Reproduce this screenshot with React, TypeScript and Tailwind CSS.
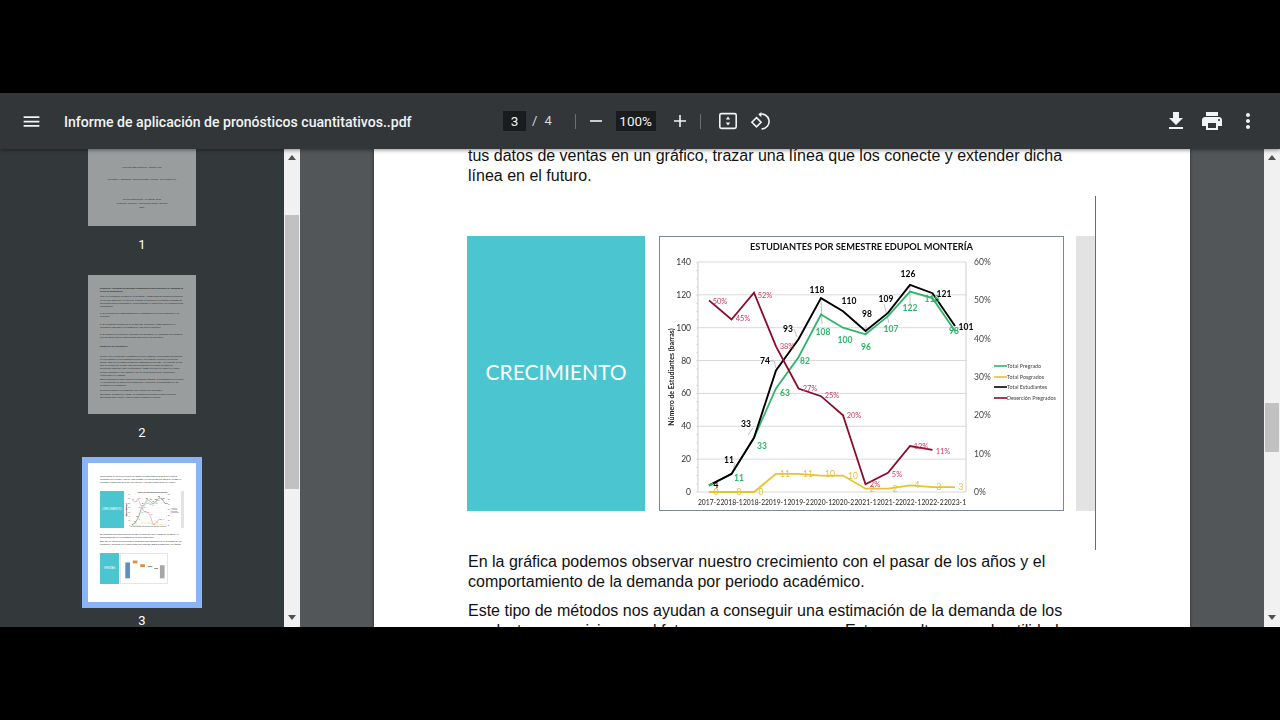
import { ReactNode } from "react";

const COL_X = [709, 731.5, 754, 776, 798.5, 821, 843, 865.5, 888, 910, 932.5, 955];
const X_LABELS = ["2017-2", "2018-1", "2018-2", "2019-1", "2019-2", "2020-1", "2020-2", "2021-1", "2021-2", "2022-1", "2022-2", "2023-1"];

const toLine = (vals: number[], scale: number) =>
  vals.map((v, i) => `${COL_X[i]},${492 - v * scale}`).join(" ");

const BLACK = [4, 11, 33, 74, 93, 118, 110, 98, 109, 126, 121, 101];
const GREEN = [4, 11, 33, 63, 82, 108, 100, 96, 107, 122, 118, 98];
const GOLD = [0, 0, 0, 11, 11, 10, 10, 2, 2, 4, 3, 3];
const RED = [50, 45, 52, 38, 27, 25, 20, 2, 5, 12, 11];

type Label = [string, number, number];

const BLACK_LABELS: Label[] = [["4", 716, 488], ["11", 729, 463], ["33", 746, 427], ["74", 765, 364], ["93", 788, 332], ["118", 817, 293], ["110", 849, 304], ["98", 867, 317], ["109", 886, 302], ["126", 908, 277], ["121", 944, 297], ["101", 966, 330]];
const GREEN_LABELS: Label[] = [["11", 739, 481], ["33", 762, 449], ["63", 785, 396], ["82", 805, 364], ["108", 823, 335], ["100", 845, 343], ["96", 866, 350], ["107", 891, 332], ["122", 910, 311], ["118", 932, 302], ["98", 954, 334]];
const GOLD_LABELS: Label[] = [["0", 716, 495], ["0", 739, 495], ["0", 761, 495], ["11", 785, 477], ["11", 808, 477], ["10", 830, 477], ["10", 853, 479], ["2", 872, 492], ["2", 895, 492], ["4", 917, 488], ["3", 939, 490], ["3", 961, 490]];
const RED_LABELS: Label[] = [["50%", 720, 304], ["45%", 743, 321], ["52%", 765, 298], ["38%", 787, 349], ["27%", 810, 391], ["25%", 832, 398], ["20%", 854, 418], ["2%", 875, 487], ["5%", 897, 477], ["12%", 921, 449], ["11%", 943, 454]];

const LEGEND: [string, string, number][] = [
  ["Total Pregrado", "#2fb56a", 366],
  ["Total Posgrados", "#e8c32e", 377],
  ["Total Estudiantes", "#000000", 387],
  ["Deserción Pregrados", "#8b0a2a", 398],
];

function GrowthChart({ className }: { className: string }) {
  return (
    <svg viewBox="659 236 405 275" className={`font-['Lato',sans-serif] ${className}`}>
      <text x="861.5" y="250" fontSize="10" fontWeight="700" textAnchor="middle" fill="#111" textLength="223" lengthAdjust="spacingAndGlyphs">
        ESTUDIANTES POR SEMESTRE EDUPOL MONTERÍA
      </text>
      {[0, 20, 40, 60, 80, 100, 120, 140].map((v) => (
        <g key={v}>
          <line x1="698" x2="966" y1={492 - v * 1.643} y2={492 - v * 1.643} stroke="#d9d9d9" strokeWidth="1" />
          <text x="691" y={495 - v * 1.643} fontSize="8.5" textAnchor="end" fill="#333">{v}</text>
        </g>
      ))}
      {[0, 10, 20, 30, 40, 50, 60].map((p) => (
        <text key={p} x="974" y={495 - p * 3.833} fontSize="8.5" fill="#444">{p}%</text>
      ))}
      {Array.from({ length: 29 }, (_, i) => (
        <line key={i} x1="696" x2="698" y1={492 - i * 8.2} y2={492 - i * 8.2} stroke="#c9c9c9" strokeWidth="0.6" />
      ))}
      <line x1="698" x2="698" y1="262" y2="492" stroke="#cfcfcf" />
      <line x1="966" x2="966" y1="262" y2="492" stroke="#cfcfcf" />
      {X_LABELS.map((l, i) => (
        <text key={l} x={COL_X[i]} y="505" fontSize="7.6" fontWeight="500" textAnchor="middle" fill="#333" textLength="22.2" lengthAdjust="spacingAndGlyphs">{l}</text>
      ))}
      <text transform="translate(674 377) rotate(-90)" fontSize="7" fontWeight="700" textAnchor="middle" fill="#222">
        Número de Estudiantes (barras)
      </text>

      <path d="M735 463l-2 8M753 428l-5 7M769 361h5l2 7M794 329l3 8M884 304l5 19M821 300l1 24M844 335l1 3M866 325v10M910 286v5M910 292v14" fill="none" stroke="#a8a8a8" strokeWidth="0.7" />

      <polyline points={toLine(GOLD, 1.643)} fill="none" stroke="#e8c32e" strokeWidth="1.8" />
      <polyline points={toLine(GREEN, 1.643)} fill="none" stroke="#2fb56a" strokeWidth="1.8" />
      <polyline points={toLine(BLACK, 1.643)} fill="none" stroke="#000" strokeWidth="1.9" />
      <path d="M709 485.5l4-2" fill="none" stroke="#2fb56a" strokeWidth="2.2" />
      <polyline points={toLine(RED, 3.833)} fill="none" stroke="#8b0a2a" strokeWidth="1.8" />

      {GOLD_LABELS.map(([t, x, y], i) => (
        <text key={i} x={x} y={y} fontSize="8.5" textAnchor="middle" fill="#e3bf3b">{t}</text>
      ))}
      {GREEN_LABELS.map(([t, x, y], i) => (
        <text key={i} x={x} y={y} fontSize="8.5" fontWeight="700" textAnchor="middle" fill="#2fb56a">{t}</text>
      ))}
      {BLACK_LABELS.map(([t, x, y], i) => (
        <text key={i} x={x} y={y} fontSize="8.5" fontWeight="700" textAnchor="middle" fill="#000">{t}</text>
      ))}
      {RED_LABELS.map(([t, x, y], i) => (
        <text key={i} x={x} y={y} fontSize="7.5" textAnchor="middle" fill="#c8405f">{t}</text>
      ))}

      {LEGEND.map(([t, c, y]) => (
        <g key={t}>
          <line x1="994" x2="1007" y1={y} y2={y} stroke={c} strokeWidth="1.6" />
          <text x="1007" y={y + 2} fontSize="5.4" fill="#444">{t}</text>
        </g>
      ))}
    </svg>
  );
}

function SmallBars() {
  return (
    <svg viewBox="0 0 48 31" className="h-[31px] w-[48px] border border-[#e5e5e5]">
      <rect x="4" y="9" width="5" height="17" fill="#5b8fc4" />
      <rect x="12" y="7" width="5" height="3" fill="#e08a3c" />
      <rect x="20" y="11" width="5" height="3" fill="#e08a3c" />
      <rect x="28" y="13" width="5" height="1" fill="#888" />
      <rect x="35" y="15" width="4" height="1" fill="#888" />
      <rect x="41" y="12" width="5" height="14" fill="#a6a6a6" />
    </svg>
  );
}

function Icon({ d, size = 24 }: { d: string; size?: number }) {
  return (
    <svg width={size} height={size} viewBox="0 0 24 24" fill="#f1f3f4">
      <path d={d} />
    </svg>
  );
}

function Scrollbar({ thumb }: { thumb: string }) {
  return (
    <div className="relative flex h-full w-4 shrink-0 flex-col items-center bg-[#f1f1f1]">
      <svg width="8" height="5" viewBox="0 0 8 5" className="mt-[6px] shrink-0">
        <path d="M4 0l4 5H0z" fill="#505050" />
      </svg>
      <div className={`w-[14px] shrink-0 bg-[#c1c1c1] ${thumb}`} />
      <svg width="8" height="5" viewBox="0 0 8 5" className="mt-auto mb-[7px] shrink-0">
        <path d="M0 0h8L4 5z" fill="#505050" />
      </svg>
    </div>
  );
}

function Thumb({ n, children, selected }: { n: number; children: ReactNode; selected?: boolean }) {
  return (
    <>
      {selected ? (
        <div className="h-[139px] w-[108px] shrink-0 overflow-hidden bg-white shadow-[0_0_0_6px_#8ab4f8]">{children}</div>
      ) : (
        <div className="h-[139px] w-[108px] shrink-0 overflow-hidden bg-[#9a9d9e]">{children}</div>
      )}
      <div className="h-[49px] shrink-0 pt-[10px] text-[13px] leading-[18px] text-white">{n}</div>
    </>
  );
}

const P1 = "tus datos de ventas en un gráfico, trazar una línea que los conecte y extender dicha línea en el futuro.";

function Sidebar() {
  return (
    <aside className="flex h-full w-[284px] shrink-0 flex-col items-center overflow-hidden bg-[#33383b] font-['Roboto',sans-serif]">
      <div className="-mt-[62px] flex flex-col items-center">
        <Thumb n={1}>
          <div className="pt-[79px] text-center font-['Liberation_Sans',sans-serif] text-[2.2px] leading-[3px] text-[#222]">
            <p>Universal Observaciones - Johana Vega</p>
            <p className="mt-[9px]">Pronóstico Y Capacidad, Marco Pronóstico Adelaqui, CC 1.003.540.96</p>
            <p className="mt-[17px]">Servicio Nacional De Aprendizaje Sena</p>
            <p className="mt-[1px]">Centro De Comercio Y Servicios Regional Antioquia</p>
            <p className="mt-[1px]">2024</p>
          </div>
        </Thumb>
        <Thumb n={2}>
          <div className="px-[12px] pt-[12px] font-['Liberation_Sans',sans-serif] text-[2.2px] leading-[3.2px] text-[#222]">
            <p className="font-bold">Evidencia: Aplicación de métodos cuantitativos para pronóstico de demanda de servicios académicos.</p>
            <p className="mt-[2px]">Una vez recopilados los datos de la demanda y establecidas las variables principales del periodo académico, se procede a aplicar los métodos de pronóstico cuantitativos adecuados para la organización y sus programas, de manera que los resultados sean comparables.</p>
            <p className="mt-[4px]">1. Se recopilan los registros históricos de estudiantes por periodo académico y su deserción.</p>
            <p className="mt-[4px]">2. Se identifican los patrones de crecimiento, tendencia y estacionalidad de la información disponible en la institución y sus sedes regionales.</p>
            <p className="mt-[4px]">3. Se aplican los métodos de pronóstico seleccionados y se comparan los resultados con los datos reales del sistema para cada uno de los semestres.</p>
            <p className="mt-[6px] font-bold">Desarrollo de la Evidencia</p>
            <p className="mt-[6px]">Método: Con el pronóstico cuantitativo se puede analizar el comportamiento histórico de la demanda de los programas ofrecidos y proyectar su evolución en periodos futuros. Para ello se toman los datos de matrícula por semestre y se ordenan en una serie de tiempo que permite observar su tendencia. Los datos muestran un crecimiento sostenido entre los años 2017 y 2022, con una leve caída en el último periodo registrado, lo que justifica el uso de promedios móviles y suavización exponencial en el análisis.</p>
            <p className="mt-[1px]">Estos resultados permiten planear la capacidad instalada, la contratación de docentes y el presupuesto de cada periodo académico, reduciendo la incertidumbre de las decisiones de la institución.</p>
            <p className="mt-[1px]">El método utilizado es consistente con el objetivo del pronóstico.</p>
            <p className="mt-[1px]">En síntesis, los datos de ventas y de demanda nos ayudan a tomar decisiones informadas para el futuro y para mejorar la gestión del servicio.</p>
          </div>
        </Thumb>
        <Thumb n={3} selected>
          <div className="pl-[12px] pt-[12px] font-['Liberation_Sans',sans-serif] text-[2.2px] leading-[2.8px] text-[#222]">
            <p className="w-[82px]">Las técnicas de series de tiempo se basan en datos históricos para proyectar la demanda. Por ejemplo, una de ellas consiste en representar {P1}</p>
            <div className="mt-[8px] flex items-center gap-[1px]">
              <div className="flex h-[37px] w-[24px] items-center justify-center bg-[#4bc5d0] text-[2.9px] text-white">CRECIMIENTO</div>
              <GrowthChart className="h-[37px] w-[55px]" />
              <div className="h-[37px] w-[3px] bg-[#e3e3e3]" />
            </div>
            <p className="mt-[5px] w-[82px]">En la gráfica podemos observar nuestro crecimiento con el pasar de los años y el comportamiento de la demanda por periodo académico.</p>
            <p className="mt-[1px] w-[82px]">Este tipo de métodos nos ayudan a conseguir una estimación de la demanda de los productos y servicios en el futuro para una empresa. Estos resultan muy de utilidad.</p>
            <div className="mt-[7px] flex items-center gap-[1px]">
              <div className="flex h-[31px] w-[19px] items-center justify-center bg-[#4bc5d0] text-[2.9px] text-white">VENTAS</div>
              <SmallBars />
            </div>
          </div>
        </Thumb>
      </div>
    </aside>
  );
}

function Toolbar() {
  return (
    <header className="relative z-10 flex h-[56px] shrink-0 items-center bg-[#323639] pl-[21px] text-[#f1f3f4] shadow-[0_1px_4px_rgba(0,0,0,0.45)] font-['Roboto',sans-serif]">
      <Icon size={21} d="M3 18h18v-2H3v2zm0-5h18v-2H3v2zm0-7v2h18V6H3z" />
      <h1 className="ml-[22px] w-[439px] truncate pt-[2px] text-[14.1px] leading-[20px] font-medium">Informe de aplicación de pronósticos cuantitativos..pdf</h1>
      <div className="flex h-[20px] w-[23px] items-center justify-center bg-[#191b1c] text-[13.5px]">3</div>
      <span className="ml-[6px] text-[13px] text-[#d5d7d8]">/</span>
      <span className="ml-[7px] text-[13px] text-[#d5d7d8]">4</span>
      <div className="ml-[23px] h-[15px] w-px bg-[#6c6f72]" />
      <svg width="24" height="24" viewBox="0 0 24 24" className="ml-[8px]" fill="#f1f3f4">
        <path d="M6 11.2h12v1.6H6z" />
      </svg>
      <div className="ml-[8px] flex h-[20px] w-[40px] items-center justify-center bg-[#191b1c] text-[13.5px]">100%</div>
      <svg width="24" height="24" viewBox="0 0 24 24" className="ml-[12px]" fill="#f1f3f4">
        <path d="M18 12.8h-5.2V18h-1.6v-5.2H6v-1.6h5.2V6h1.6v5.2H18z" />
      </svg>
      <div className="ml-[8px] mr-[15px] h-[15px] w-px bg-[#6c6f72]" />
      <svg width="24" height="24" viewBox="0 0 24 24" fill="none" stroke="#f1f3f4">
        <rect x="3.8" y="4.6" width="16.4" height="14.8" rx="1.6" strokeWidth="1.6" />
        <path d="M12 7.5l2.2 3h-4.4zM12 16.5l-2.2-3h4.4z" fill="#f1f3f4" stroke="none" />
      </svg>
      <svg width="24" height="24" viewBox="0 0 24 24" className="ml-[8px]" fill="none" stroke="#f1f3f4" strokeWidth="1.6">
        <path d="M8.5 8.6l4.6 4.6-4.6 4.6-4.6-4.6z" />
        <path d="M11 5.6a7.4 7.4 0 1 1 2.6 14.3" />
        <path d="M13.4 3L10.4 5.6l3 2.6" fill="#f1f3f4" stroke="none" />
      </svg>
      <div className="ml-auto flex items-center gap-[12px] pr-[20px]">
        <Icon d="M19 9h-4V3H9v6H5l7 7 7-7zM5 18v2h14v-2H5z" />
        <Icon d="M19 8H5c-1.66 0-3 1.34-3 3v6h4v4h12v-4h4v-6c0-1.66-1.34-3-3-3zm-3 11H8v-5h8v5zm3-7c-.55 0-1-.45-1-1s.45-1 1-1 1 .45 1 1-.45 1-1 1zm-1-9H6v4h12V3z" />
        <Icon d="M12 8c1.1 0 2-.9 2-2s-.9-2-2-2-2 .9-2 2 .9 2 2 2zm0 2c-1.1 0-2 .9-2 2s.9 2 2 2 2-.9 2-2-.9-2-2-2zm0 6c-1.1 0-2 .9-2 2s.9 2 2 2 2-.9 2-2-.9-2-2-2z" />
      </div>
    </header>
  );
}

function PdfPage() {
  return (
    <article className="h-[478px] w-[816px] shrink-0 overflow-hidden bg-white pl-[94px] font-['Liberation_Sans',sans-serif] text-[16px] leading-[20px] text-[#111] shadow-[0_0_3px_rgba(0,0,0,0.5)]">
      <p className="-mt-[3px] w-[610px]">{P1}</p>
      <figure className="mt-[10px] -ml-px flex h-[354px] w-[629px] items-center border-r border-[#6b6b6b]">
        <div className="flex h-[275px] w-[178px] shrink-0 items-center justify-center bg-[#4bc5d0] pb-[2px] font-['Lato',sans-serif] text-[21px] text-white">
          CRECIMIENTO
        </div>
        <div className="ml-[14px] h-[275px] w-[405px] shrink-0 border border-[#7d8794] bg-white">
          <GrowthChart className="-m-px h-[275px] w-[405px] blur-[0.3px]" />
        </div>
        <div className="ml-[12px] h-[275px] w-[19px] shrink-0 bg-[#e3e3e3]" />
      </figure>
      <p className="mt-[2px] w-[610px]">
        En la gráfica podemos observar nuestro crecimiento con el pasar de los años y el comportamiento de la demanda por periodo académico.
      </p>
      <p className="mt-[9px] w-[610px]">
        Este tipo de métodos nos ayudan a conseguir una estimación de la demanda de los productos y servicios en el futuro para una empresa. Estos resultan muy de utilidad.
      </p>
    </article>
  );
}

export default function App() {
  return (
    <div className="flex h-[720px] w-[1280px] flex-col overflow-hidden bg-black pt-[93px]">
      <Toolbar />
      <div className="flex h-[478px] shrink-0">
        <Sidebar />
        <Scrollbar thumb="mt-[55px] h-[274px]" />
        <main className="flex h-full flex-1 justify-center overflow-hidden bg-[#525659]">
          <PdfPage />
        </main>
        <Scrollbar thumb="mt-[243px] h-[49px]" />
      </div>
    </div>
  );
}
